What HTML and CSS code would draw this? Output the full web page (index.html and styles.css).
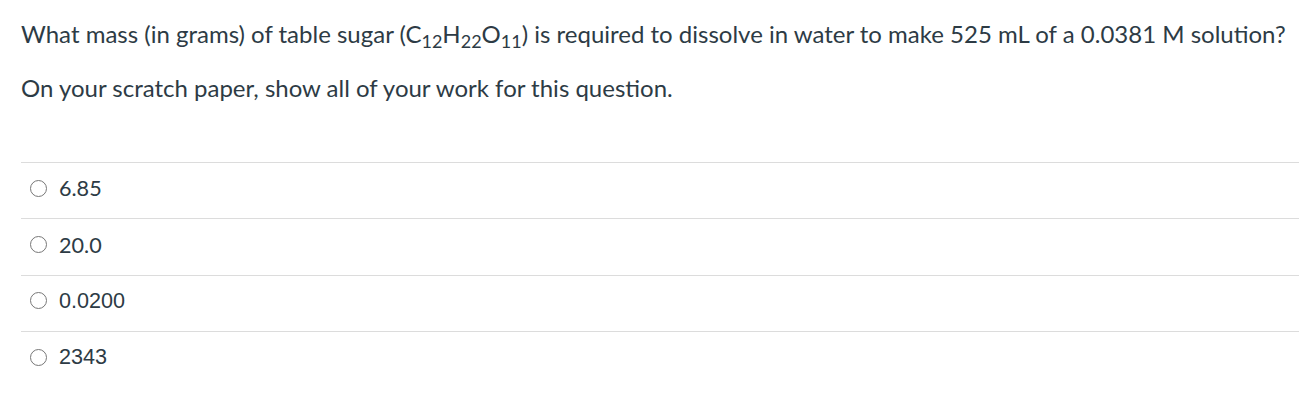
FILE: index.html
```html
<!DOCTYPE html>
<html>
<head>
<meta charset="utf-8">
<link rel="stylesheet" href="styles.css">
</head>
<body>
<div class="quiz">
  <div class="question">
    <p class="q-line">What mass (in grams) of table sugar (C<sub>12</sub>H<sub>22</sub>O<sub>11</sub>) is required to dissolve in water to make 525 mL of a 0.0381 M solution?</p>
    <p class="q-line">On your scratch paper, show all of your work for this question.</p>
  </div>
  <div class="answers">
    <label class="answer"><span class="radio"></span><span class="a-text lato">6.85</span></label>
    <label class="answer"><span class="radio"></span><span class="a-text lato">20.0</span></label>
    <label class="answer"><span class="radio"></span><span class="a-text arial">0.0200</span></label>
    <label class="answer"><span class="radio"></span><span class="a-text arial">2343</span></label>
  </div>
</div>
</body>
</html>
```
FILE: styles.css
```css
html, body {
  margin: 0;
  padding: 0;
  background: #fff;
}
.quiz {
  padding: 0 0 0 21px;
  color: #2d3b45;
  font-family: Lato, "Liberation Sans", sans-serif;
}
.question {
  padding-top: 16px;
}
.q-line {
  margin: 0 0 18px 0;
  font-size: 24px;
  line-height: 36px;
}
.q-line sub {
  font-size: 18px;
  vertical-align: -5px;
  line-height: 0;
}
.answers {
  margin-top: 56px;
  border-top: 1px solid #dcdcdc;
}
.answer {
  display: flex;
  align-items: center;
  height: 50.35px;
  padding-bottom: 5px;
  box-sizing: content-box;
  border-bottom: 1px solid #dcdcdc;
  padding-left: 9px;
}
.answer:last-child {
  border-bottom: none;
}
.radio {
  width: 17px;
  height: 17px;
  border: 1.5px solid #777;
  border-radius: 50%;
  box-sizing: border-box;
  margin-right: 12px;
  flex: none;
}
.a-text {
  font-size: 21.6px;
}
.lato { font-family: Lato, sans-serif; }
.arial { font-family: "Liberation Sans", Arial, sans-serif; }
```
